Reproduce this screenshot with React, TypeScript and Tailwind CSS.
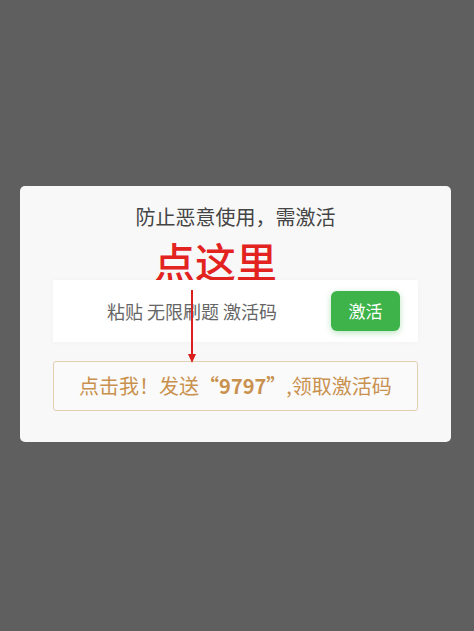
import React from "react";

const cjk = { fontFamily: '"Noto Sans CJK SC", "Noto Sans", sans-serif' };

export default function App() {
  return (
    <div
      className="min-h-screen w-full bg-[#5f5f5f] flex items-center pl-[20px] pb-[3px]"
      style={cjk}
    >
      <div className="relative w-[431px] rounded-[5px] bg-[#f8f8f8] px-[33px] pt-[19px] pb-[31px] flex flex-col">
        <h2 className="text-center text-[20px] leading-[24px] text-[#444444]">
          防止恶意使用，需激活
        </h2>

        <div className="mt-[11px] pl-[101px] text-[41px] leading-[40px] font-medium text-[#e3231f]">
          点这里
        </div>

        {/* activation code input */}
        <div className="h-[62px] bg-white flex items-center shadow-[0_0_6px_rgba(0,0,0,0.03)]">
          <div className="flex-1 text-center text-[18px] text-[#666666]">
            粘贴 无限刷题 激活码
          </div>
          <button className="mr-[18px] h-[40px] w-[69px] rounded-[6px] bg-[#3db34a] text-[17px] text-white shadow-[0_2px_6px_rgba(61,179,74,0.35)]">
            激活
          </button>
        </div>

        <button className="mt-[19px] h-[50px] rounded-[3px] border border-[#e2cfb2] bg-[#fafafa] text-[20px] text-[#c9914e]">
          点击我！发送<span className="font-bold">“9797”</span>,领取激活码
        </button>

        {/* red arrow annotation */}
        <svg
          className="absolute left-[167px] top-[104px]"
          width="10"
          height="74"
          viewBox="0 0 10 74"
        >
          <line x1="5" y1="0" x2="5" y2="66" stroke="#d9201e" strokeWidth="2" />
          <path d="M1 64 L5 73 L9 64 Z" fill="#d9201e" />
        </svg>
      </div>
    </div>
  );
}
